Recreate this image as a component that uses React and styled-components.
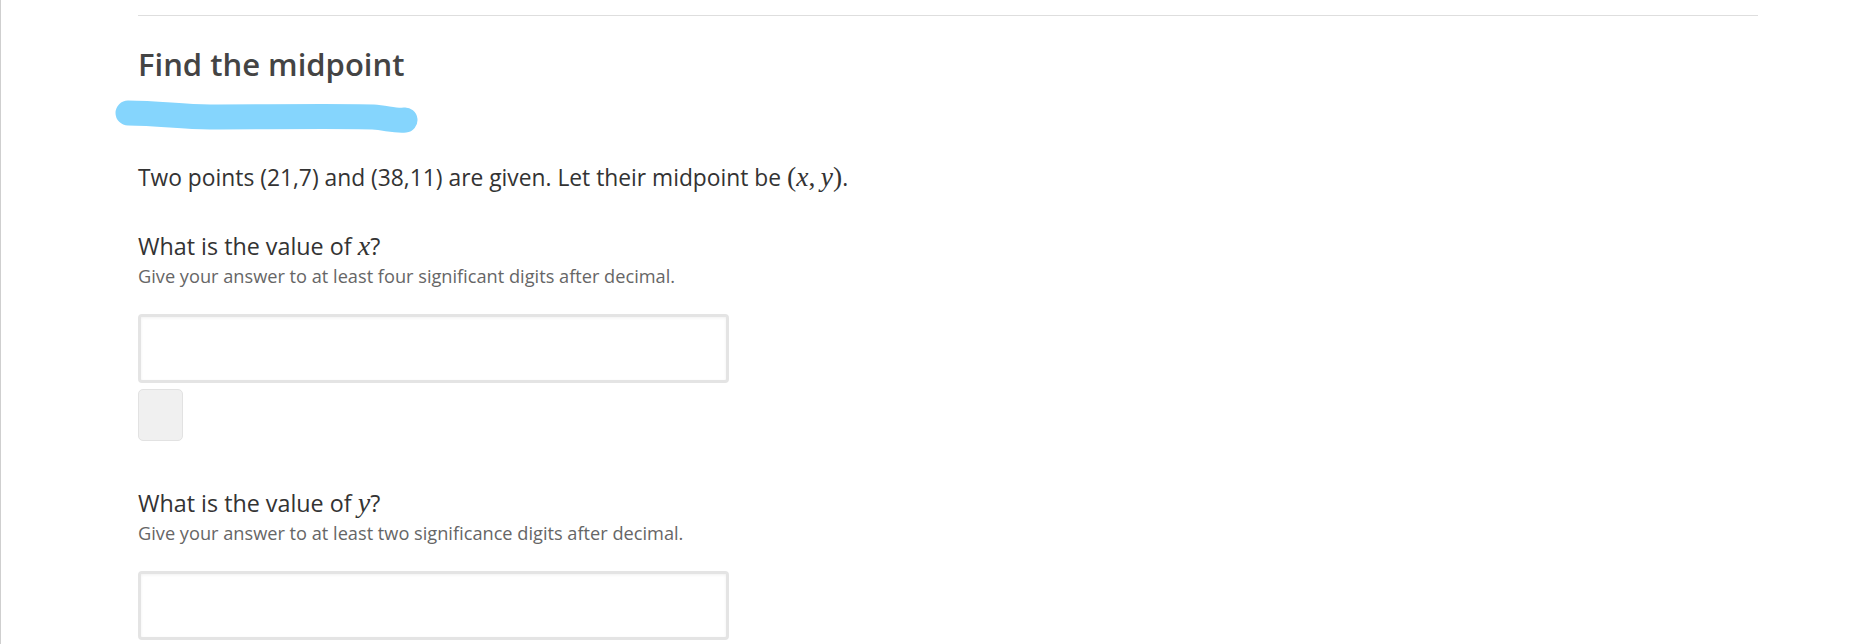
import React from 'react';
import styled, { createGlobalStyle } from 'styled-components';

const GlobalStyle = createGlobalStyle`
	html, body {
		margin: 0;
		padding: 0;
		background: #ffffff;
	}
	body {
		font-family: 'Open Sans', 'Noto Sans', sans-serif;
		color: #333333;
	}
`;

const Page = styled.div`
	min-height: 644px;
	border-left: 1px solid #cfcfcf;
	padding: 15px 97px 0 137px;
`;

const Rule = styled.hr`
	margin: 0;
	border: 0;
	border-top: 1px solid #dedede;
`;

const Heading = styled.h1`
	margin: 28px 0 0;
	font-size: 31px;
	line-height: 40px;
	font-weight: 600;
	color: #444444;
`;

const Highlight = styled.svg`
	display: block;
	margin: 16px 0 0 -23px;
`;

const Statement = styled.p`
	margin: 26px 0 0;
	font-size: 22.8px;
	line-height: 30px;
`;

const Math = styled.span`
	font-family: 'Liberation Serif', 'DejaVu Serif', serif;
	font-size: 1.21em;
`;

const Var = styled.i`
	font-style: italic;
`;

const Question = styled.div`
	margin-top: ${(p) => p.$gap}px;
`;

const Prompt = styled.div`
	font-size: 23.3px;
	line-height: 28px;
	color: #333333;
`;

const Hint = styled.div`
	margin-top: 4px;
	font-size: 18.2px;
	line-height: 24px;
	color: #666666;
`;

const AnswerBox = styled.input`
	display: block;
	box-sizing: border-box;
	margin-top: 26px;
	width: 591px;
	height: 69px;
	border: 3px solid #e4e4e4;
	border-radius: 4px;
	box-shadow: inset 0 1px 3px rgba(0, 0, 0, 0.06);
	background: #ffffff;
	outline: none;
`;

const CheckButton = styled.button`
	display: block;
	box-sizing: border-box;
	margin-top: 6px;
	width: 45px;
	height: 52px;
	border: 1px solid #e2e2e2;
	border-radius: 5px;
	background: #f0f0f0;
	padding: 0;
`;

const Var2 = ({ children }) => <Math><Var>{children}</Var></Math>;

export default function App() {
	return (
		<>
			<GlobalStyle />
			<Page>
				<Rule />
				<Heading>Find the midpoint</Heading>
				<Highlight width="304" height="36" viewBox="0 0 304 36">
					<path
						d="M13 13 C 45 13, 65 17, 95 17 C 150 17, 220 16, 258 17 C 272 18, 280 21, 290 20"
						fill="none"
						stroke="#85d5fd"
						strokeWidth="25"
						strokeLinecap="round"
						strokeLinejoin="round"
					/>
				</Highlight>
				<Statement>
					Two points (21,7) and (38,11) are given. Let their midpoint be <Math>(<Var>x</Var>,&#8201;<Var>y</Var>)</Math>.
				</Statement>
				<Question $gap={39}>
					<Prompt>What is the value of <Var2>x</Var2>?</Prompt>
					<Hint>Give your answer to at least four significant digits after decimal.</Hint>
					<AnswerBox type="text" />
					<CheckButton type="button" />
				</Question>
				<Question $gap={48}>
					<Prompt>What is the value of <Var2>y</Var2>?</Prompt>
					<Hint>Give your answer to at least two significance digits after decimal.</Hint>
					<AnswerBox type="text" />
				</Question>
			</Page>
		</>
	);
}
